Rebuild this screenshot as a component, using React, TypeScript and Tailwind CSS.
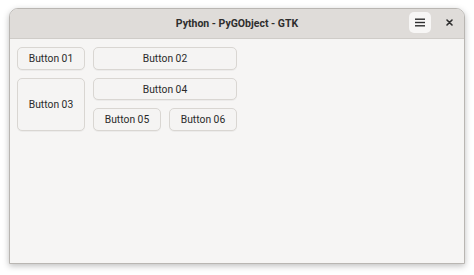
import React from 'react';

function GtkButton({ label, className = '' }: { label: string; className?: string }) {
  return (
    <button
      className={`flex items-center justify-center rounded-[5px] border border-[#d9d6d2] bg-[#f5f4f3] pt-[1px] text-[10.3px] text-[#2a2a2a] shadow-[0_1px_0_rgba(0,0,0,0.04)] ${className}`}
    >
      {label}
    </button>
  );
}

export default function App() {
  return (
    <div className="h-[275px] w-[474px] bg-white pl-[9px] pt-[8px]" style={{ fontFamily: 'Roboto, "Noto Sans", sans-serif' }}>
      <div className="flex h-[256px] w-[456px] flex-col overflow-hidden rounded-t-[9px] border border-[#b9b6b2] bg-[#f6f5f4] shadow-[0_2px_6px_rgba(0,0,0,0.25)]">
        <header className="relative flex h-[30px] shrink-0 items-center justify-center border-b border-[#cfccc8] bg-[#dfdcd9]">
          <span className="text-[10.5px] font-bold text-[#2e2e2e]">Python - PyGObject - GTK</span>
          <div className="absolute right-[9px] top-[3px] flex items-center gap-[12px]">
            <div className="flex h-[21px] w-[22px] items-center justify-center rounded-[5px] bg-[#f7f6f5]">
              <svg width="10" height="9" viewBox="0 0 10 9">
                <rect x="0" y="0.5" width="10" height="1.4" fill="#2e2e2e" />
                <rect x="0" y="3.8" width="10" height="1.4" fill="#2e2e2e" />
                <rect x="0" y="7.1" width="10" height="1.4" fill="#2e2e2e" />
              </svg>
            </div>
            <div className="flex h-[21px] w-[12px] items-center justify-center">
              <svg width="7" height="7" viewBox="0 0 7 7">
                <path d="M1 1 L6 6 M6 1 L1 6" stroke="#2e2e2e" strokeWidth="1.6" strokeLinecap="round" />
              </svg>
            </div>
          </div>
        </header>
        <div className="grid grid-cols-[68px_68px_68px] grid-rows-[23px_22px_23px] gap-x-[8px] gap-y-[8px] px-[7px] pt-[8px]">
          <GtkButton label="Button 01" />
          <GtkButton label="Button 02" className="col-span-2" />
          <GtkButton label="Button 03" className="row-span-2" />
          <GtkButton label="Button 04" className="col-span-2" />
          <GtkButton label="Button 05" />
          <GtkButton label="Button 06" />
        </div>
      </div>
    </div>
  );
}
